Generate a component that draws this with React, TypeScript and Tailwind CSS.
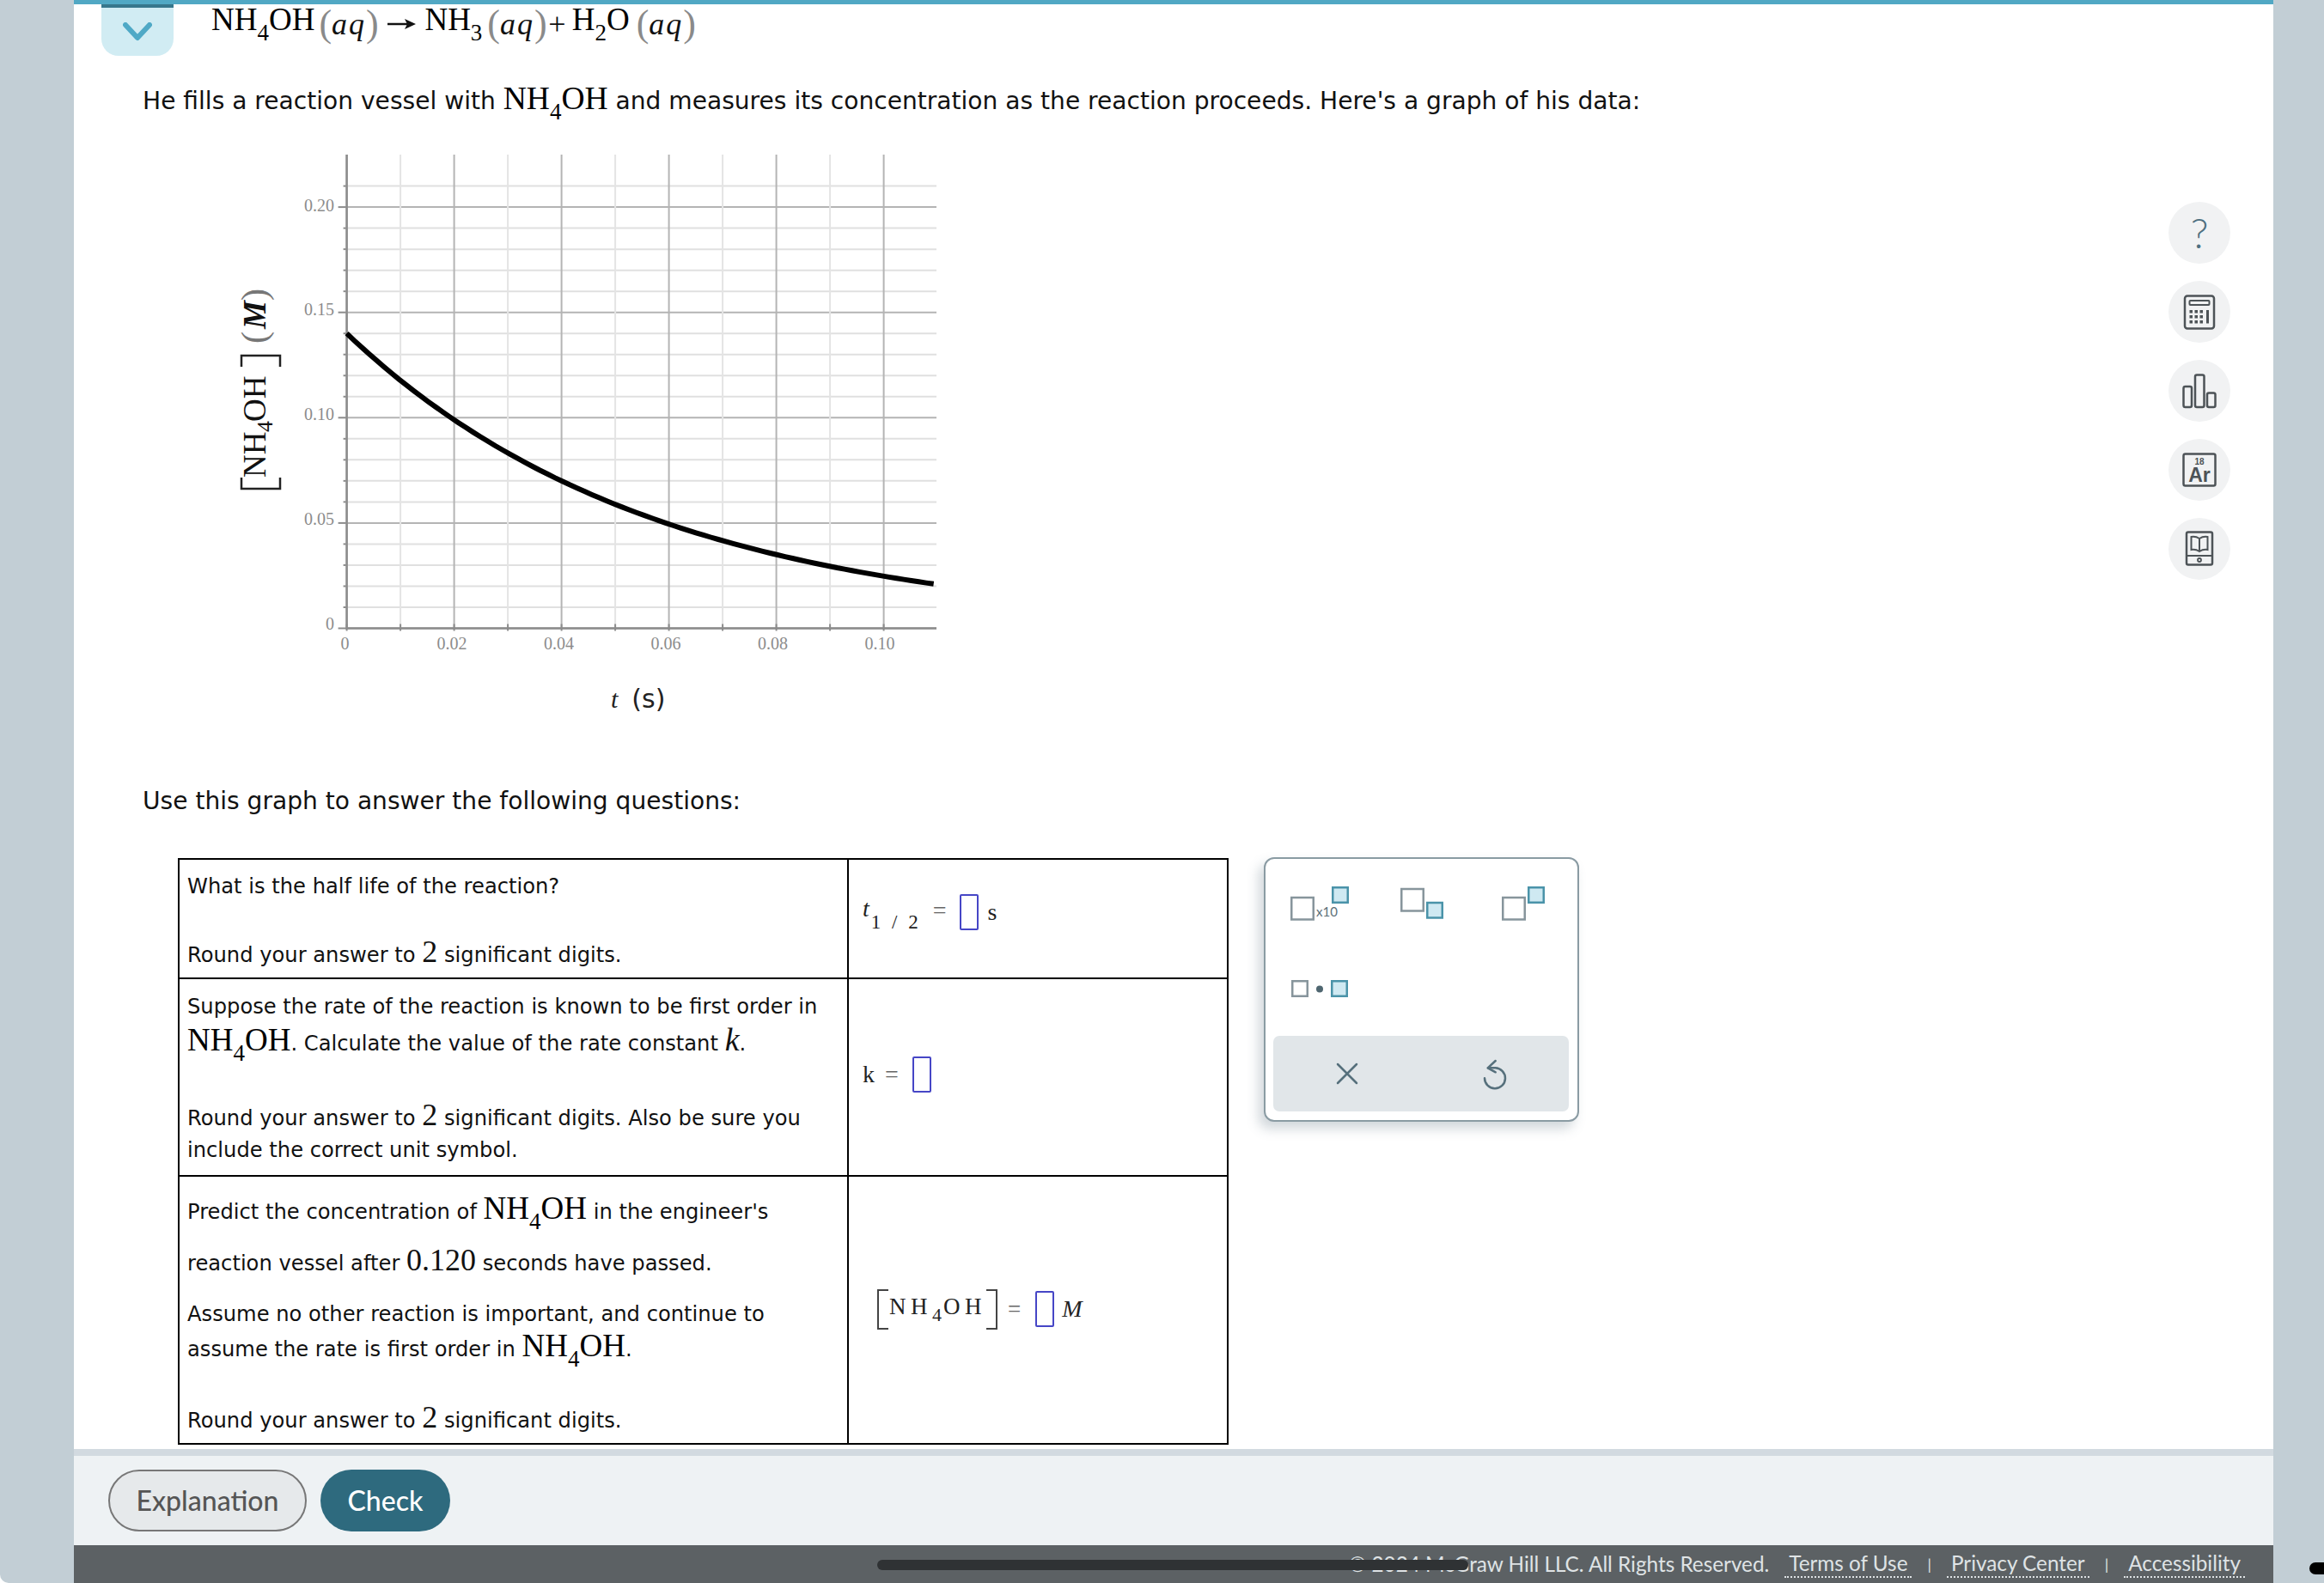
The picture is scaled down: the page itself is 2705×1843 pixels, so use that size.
const body = "font-['DejaVu_Sans',sans-serif]";
const serif = "font-['Liberation_Serif',serif]";
const lato = "font-['Lato',sans-serif]";

function Chem({ sub = "4", after = "OH", lead = "NH", size = "text-[37px]" }: { sub?: string; after?: string; lead?: string; size?: string }) {
  return (
    <span className={`${serif} ${size} leading-none text-black`}>
      {lead}
      <span className="align-[-12px] text-[27px] leading-none">{sub}</span>
      {after}
    </span>
  );
}

function Aq() {
  return (
    <span className={`${serif} inline-flex w-[64px] items-center justify-between text-[36px]`}>
      <span className="text-[44px] font-light leading-none text-[#8a8a8a]">(</span>
      <span className="italic tracking-[2px]">aq</span>
      <span className="text-[44px] font-light leading-none text-[#8a8a8a]">)</span>
    </span>
  );
}

function Arrow() {
  return (
    <svg width="33" height="14" viewBox="0 0 33 14" className="ml-[16px] mr-[10px]">
      <path d="M0 7h24" stroke="#111" strokeWidth="2.5" />
      <path d="M20 1l13 6-13 6 3-6z" fill="#111" />
    </svg>
  );
}

function Chart() {
  const X = (t: number) => 143.6 + 6250 * t;
  const Y = (c: number) => 561.5 - 2452 * c;
  const curve = Array.from({ length: 80 }, (_, i) => {
    const t = (0.1093 * i) / 79;
    return `${i === 0 ? "M" : "L"}${X(t).toFixed(1)} ${Y(0.14 * Math.pow(0.5, t / 0.04)).toFixed(1)}`;
  }).join(" ");
  const ys = Array.from({ length: 22 }, (_, i) => i);
  const xs = Array.from({ length: 11 }, (_, i) => i);
  return (
    <svg width="840" height="620" viewBox="0 0 840 620" className="ml-[174px] mt-[27px] shrink-0">
      {ys.map((i) => (
        <g key={i}>
          <path d={`M${X(0)} ${Y(i / 100)}H830`} stroke={i % 5 === 0 ? "#b4b4b4" : "#e0e0e0"} strokeWidth="2" />
          <path d={`M${X(0) - (i % 5 === 0 ? 10 : 4)} ${Y(i / 100)}H${X(0)}`} stroke="#8c8c8c" strokeWidth="2" />
        </g>
      ))}
      {xs.map((i) => (
        <g key={i}>
          <path d={`M${X(i / 100)} 10V${Y(0)}`} stroke={i % 2 === 0 ? "#b4b4b4" : "#e4e4e4"} strokeWidth="2" />
          <path d={`M${X(i / 100)} ${Y(0) - 5}V${Y(0) + 3}`} stroke="#8c8c8c" strokeWidth="2" />
        </g>
      ))}
      <path d={`M${X(0)} 10V${Y(0)}H830`} fill="none" stroke="#8c8c8c" strokeWidth="2.5" />
      <path d={curve} fill="none" stroke="#000" strokeWidth="6" />
      {["0", "0.05", "0.10", "0.15", "0.20"].map((l, i) => (
        <text key={l} x="129" y={562.5 - 121.75 * i} textAnchor="end" fontSize="20" fill="#8c8c8c" fontFamily="Liberation Serif">
          {l}
        </text>
      ))}
      {["0", "0.02", "0.04", "0.06", "0.08", "0.10"].map((l, i) => (
        <text key={l} x={X(i * 0.02) - (i === 0 ? 2 : 2 + i * 0.5)} y="586" textAnchor="middle" fontSize="20" fill="#8c8c8c" fontFamily="Liberation Serif">
          {l}
        </text>
      ))}
      <g transform="translate(49 400) rotate(-90)" fontFamily="Liberation Serif" fill="#111">
        <path d="M14 -28H1V17H14" fill="none" stroke="#222" strokeWidth="2.5" />
        <text x="14" y="0" fontSize="37">NH</text>
        <text x="67" y="8" fontSize="26">4</text>
        <text x="79" y="0" fontSize="37">OH</text>
        <path d="M143 -28H156V17H143" fill="none" stroke="#222" strokeWidth="2.5" />
        <text x="170" y="1" fontSize="42" fill="#777">(</text>
        <text x="187" y="0" fontSize="37" fontStyle="italic" fontWeight="700">M</text>
        <text x="220" y="1" fontSize="42" fill="#777">)</text>
      </g>
    </svg>
  );
}

function AnswerBox() {
  return <span className="block h-[42px] w-[22px] shrink-0 rounded-[2px] border-[2.5px] border-[#4646c6]" />;
}

function Line({ className = "", children }: { className?: string; children: React.ReactNode }) {
  return <p className={`${body} h-[38px] whitespace-nowrap text-[24.2px] leading-[38px] text-[#111] ${className}`}>{children}</p>;
}

function Num({ children }: { children: React.ReactNode }) {
  return <span className={`${serif} text-[36px] leading-none`}>{children}</span>;
}

function AnswerTable() {
  return (
    <div className="grid h-[683px] w-[1223px] shrink-0 grid-cols-[779px_1fr] grid-rows-[139px_230px_1fr] border-2 border-black">
      <div className="border-r-2 border-b-2 border-black pl-[9px] pt-[12px]">
        <Line>What is the half life of the reaction?</Line>
        <Line className="mt-[39px]">
          Round your answer to <Num>2</Num> significant digits.
        </Line>
      </div>
      <div className={`${serif} flex items-center border-b-2 border-black pb-[16px] pl-[16px] text-[28px] text-[#222]`}>
        <span className="mb-[8px] italic">t</span>
        <span className="ml-[2px] mt-[26px] text-[23px] tracking-[2px] [word-spacing:3px]">1 / 2</span>
        <span className="ml-[15px] mb-[4px] mr-[16px] text-[#666]">=</span>
        <AnswerBox />
        <span className="ml-[10px]">s</span>
      </div>

      <div className="border-r-2 border-b-2 border-black pl-[9px] pt-[13px]">
        <Line>Suppose the rate of the reaction is known to be first order in</Line>
        <Line>
          <Chem />. Calculate the value of the rate constant <span className={`${serif} text-[38px] italic leading-none`}>k</span>.
        </Line>
        <Line className="mt-[51px]">
          Round your answer to <Num>2</Num> significant digits. Also be sure you
        </Line>
        <Line className="mt-[2px]">include the correct unit symbol.</Line>
      </div>
      <div className={`${serif} flex items-center border-b-2 border-black pb-[6px] pl-[16px] text-[28px] text-[#222]`}>
        <span>k</span>
        <span className="ml-[12px] mr-[16px] text-[#666]">=</span>
        <AnswerBox />
      </div>

      <div className="border-r-2 border-black pl-[9px] pt-[18px]">
        <Line>
          Predict the concentration of <Chem /> in the engineer's
        </Line>
        <Line className="mt-[23px]">
          reaction vessel after <Num>0.120</Num> seconds have passed.
        </Line>
        <Line className="mt-[24px]">Assume no other reaction is important, and continue to</Line>
        <Line className="-mt-px">
          assume the rate is first order in <Chem />.
        </Line>
        <Line className="mt-[46px]">
          Round your answer to <Num>2</Num> significant digits.
        </Line>
      </div>
      <div className={`${serif} flex items-center pb-[2px] pl-[33px] text-[27px] text-[#222]`}>
        <span className="h-[47px] w-[13px] border-y-2 border-l-2 border-[#444]" />
        <span className="ml-[1px] tracking-[5.5px]">
          NH<span className="align-[-8px] text-[22px] tracking-[2px]">4</span>OH
        </span>
        <span className="h-[47px] w-[13px] border-y-2 border-r-2 border-[#444]" />
        <span className="ml-[12px] mr-[17px] text-[#666]">=</span>
        <AnswerBox />
        <span className="ml-[9px] text-[28px] italic">M</span>
      </div>
    </div>
  );
}

const grayBox = { fill: "#fff", stroke: "#87959c", strokeWidth: 2.5 };
const tealBox = { fill: "#cfe9f2", stroke: "#4a93a9", strokeWidth: 2.5 };

function Keypad() {
  return (
    <div className="-mt-px h-[308px] w-[367px] shrink-0 rounded-[12px] border-2 border-[#8a9ba3] bg-white px-[9px] pt-[32px] shadow-[-6px_8px_14px_rgba(90,110,125,0.28)]">
      <div className="flex items-start pl-[20px]">
        <svg width="68" height="40" viewBox="0 0 68 40">
          <rect x="1.25" y="13" width="25.5" height="25.5" {...grayBox} />
          <rect x="49.25" y="1.25" width="17.5" height="17.5" {...tealBox} />
          <text x="30" y="35" fontSize="15" fill="#5c6f78" fontFamily="Lato">x10</text>
        </svg>
        <svg width="50" height="38" viewBox="0 0 50 38" className="ml-[60px]">
          <rect x="1.25" y="3" width="25.5" height="25.5" {...grayBox} />
          <rect x="31.25" y="19" width="17.5" height="17.5" {...tealBox} />
        </svg>
        <svg width="50" height="40" viewBox="0 0 50 40" className="ml-[68px]">
          <rect x="1.25" y="13" width="25.5" height="25.5" {...grayBox} />
          <rect x="31.25" y="1.25" width="17.5" height="17.5" {...tealBox} />
        </svg>
      </div>
      <div className="mt-[69px] pl-[21px]">
        <svg width="66" height="20" viewBox="0 0 66 20" className="block">
          <rect x="1.25" y="1.25" width="17.5" height="17.5" {...grayBox} />
          <circle cx="33" cy="10.5" r="4" fill="#4f6670" />
          <rect x="47.25" y="1.25" width="17.5" height="17.5" {...tealBox} />
        </svg>
      </div>
      <div className="mt-[45px] grid h-[88px] w-[344px] grid-cols-2 rounded-[7px] bg-[#e1e6e9]">
        <div className="flex items-center justify-center">
          <svg width="26" height="26" viewBox="0 0 26 26">
            <path d="M2 2l22 22M24 2L2 24" stroke="#56707c" strokeWidth="2.5" strokeLinecap="round" />
          </svg>
        </div>
        <div className="flex items-center justify-center">
          <svg width="30" height="40" viewBox="0 0 30 40">
            <path d="M7 13.3h8.5a12 12 0 1 1-12.5 12" fill="none" stroke="#56707c" strokeWidth="2.5" strokeLinecap="round" />
            <path d="M15.7 5l-9 8.3 9 5" fill="none" stroke="#56707c" strokeWidth="2.5" strokeLinecap="round" strokeLinejoin="round" />
          </svg>
        </div>
      </div>
    </div>
  );
}

function RailButton({ children }: { children: React.ReactNode }) {
  return <div className="flex h-[72px] w-[72px] items-center justify-center rounded-full bg-[#f1f2f3]">{children}</div>;
}

function Rail() {
  const s = { fill: "none", stroke: "#4d5357", strokeWidth: 2.5 };
  return (
    <div className="flex shrink-0 flex-col gap-[20px] pr-[50px] pt-[230px]">
      <RailButton>
        <span className={`${lato} text-[48px] font-light leading-none text-[#4f7080]`}>?</span>
      </RailButton>
      <RailButton>
        <svg width="72" height="72" viewBox="0 0 72 72">
          <rect x="19" y="17.5" width="34" height="38" rx="3" {...s} />
          <rect x="24.5" y="23" width="23" height="5" rx="1" {...s} strokeWidth="2" />
          {[34, 40, 46].map((y) =>
            [24.5, 30.5, 36.5].map((x) => <rect key={`${x}-${y}`} x={x} y={y} width="3.5" height="3.5" fill="#4d5357" />),
          )}
          <rect x="44" y="34" width="3" height="15.5" fill="#4d5357" />
        </svg>
      </RailButton>
      <RailButton>
        <svg width="72" height="72" viewBox="0 0 72 72">
          <rect x="17.5" y="31" width="9.5" height="24" rx="2" {...s} />
          <rect x="31" y="17.5" width="10.5" height="37.5" rx="2" {...s} />
          <rect x="45" y="38.5" width="9.5" height="16.5" rx="2" {...s} />
        </svg>
      </RailButton>
      <RailButton>
        <svg width="72" height="72" viewBox="0 0 72 72">
          <rect x="17.5" y="17.5" width="37" height="37" rx="2" {...s} />
          <text x="36" y="30" textAnchor="middle" fontSize="10" fontWeight="700" fill="#4d5357" fontFamily="Liberation Sans">18</text>
          <text x="36" y="50" textAnchor="middle" fontSize="23" fontWeight="700" fill="#4d5357" fontFamily="Liberation Sans">Ar</text>
        </svg>
      </RailButton>
      <RailButton>
        <svg width="72" height="72" viewBox="0 0 72 72">
          <rect x="21" y="16.5" width="30" height="38" rx="2" {...s} />
          <path d="M21 44h30" {...s} strokeWidth="2" />
          <circle cx="36" cy="49" r="2" {...s} strokeWidth="1.8" />
          <path d="M26.5 22q5-1 9.5 2q4.5-3 9.5-2v15q-5-1-9.5 2q-4.5-3-9.5-2zM36 24v15" {...s} strokeWidth="2" />
        </svg>
      </RailButton>
    </div>
  );
}

export default function App() {
  return (
    <div className="relative flex h-[1843px] w-[2705px] overflow-hidden rounded-bl-[10px] bg-[#c2ced5]">
      <div className="w-[86px] shrink-0" />
      <div className="flex w-[2560px] shrink-0 flex-col bg-white">
        <div className="h-[5px] shrink-0 bg-[#51a8c4]" />
        <div className="flex min-h-0 flex-1">
          <div className="min-w-0 flex-1">
            <div className="flex h-[60px] items-start">
              <div className="ml-[32px] flex h-[60px] w-[84px] items-center justify-center rounded-b-[20px] border-t-4 border-[#37778c] bg-[#d1ecf3]">
                <svg width="34" height="22" viewBox="0 0 34 22">
                  <path d="M3 3l14 15L31 3" fill="none" stroke="#4fa9c6" strokeWidth="6" strokeLinecap="round" strokeLinejoin="round" />
                </svg>
              </div>
              <div className="ml-[44px] flex h-[46px] items-center text-[#111]">
                <Chem />
                <span className="w-[5px]" />
                <Aq />
                <Arrow />
                <Chem sub="3" after="" />
                <span className="w-[6px]" />
                <Aq />
                <span className={`${serif} mx-[7px] text-[36px]`}>+</span>
                <Chem lead="H" sub="2" after="O" />
                <span className="w-[8px]" />
                <Aq />
              </div>
            </div>
            <p className={`${body} ml-[80px] mt-[28px] h-[50px] whitespace-nowrap text-[28.1px] leading-[50px] text-[#111]`}>
              He fills a reaction vessel with <Chem size="text-[37.5px]" /> and measures its concentration as the reaction proceeds. Here's a graph of his data:
            </p>
            <Chart />
            <p className={`${body} ml-[625px] mt-[4px] h-[40px] text-[30px] leading-[40px] text-[#222]`}>
              <span className={`${serif} italic`}>t</span>
              <span className="ml-[16px]">(s)</span>
            </p>
            <p className={`${body} ml-[80px] mt-[79px] h-[40px] text-[28.1px] leading-[40px] text-[#111]`}>Use this graph to answer the following questions:</p>
            <div className="ml-[121px] mt-[46px] flex items-start gap-[41px]">
              <AnswerTable />
              <Keypad />
            </div>
          </div>
          <Rail />
        </div>
        <div className="h-[8px] shrink-0 bg-[#d2dae0]" />
        <div className={`${lato} flex h-[104px] shrink-0 items-start gap-[16px] bg-[#eef2f4] pl-[40px] pt-[16px]`}>
          <button className="h-[72px] w-[231px] rounded-full border-2 border-[#777] bg-[#e6e9eb] text-[32px] font-medium text-[#555]">Explanation</button>
          <button className="h-[72px] w-[151px] rounded-full bg-[#2e6a7e] text-[32px] font-medium text-white">Check</button>
        </div>
        <div className={`${lato} relative flex h-[44px] shrink-0 items-center justify-end gap-[18px] bg-[#5c6164] pr-[33px] text-[24.3px] text-[#dfe3e5]`}>
          <span>© 2024 McGraw Hill LLC. All Rights Reserved.</span>
          <span className="border-b-2 border-dotted border-[#dfe3e5] px-[5px] leading-[30px]">Terms of Use</span>
          <span className="text-[18px]">|</span>
          <span className="border-b-2 border-dotted border-[#dfe3e5] px-[5px] leading-[30px]">Privacy Center</span>
          <span className="text-[18px]">|</span>
          <span className="border-b-2 border-dotted border-[#dfe3e5] px-[5px] leading-[30px]">Accessibility</span>
          <div className="absolute left-[935px] top-[17px] h-[12px] w-[688px] rounded-full bg-[#2f3234]" />
        </div>
      </div>
      <div className="flex-1" />
      <div className="absolute bottom-[10px] right-0 h-[14px] w-[17px] rounded-l-full bg-black" />
    </div>
  );
}
